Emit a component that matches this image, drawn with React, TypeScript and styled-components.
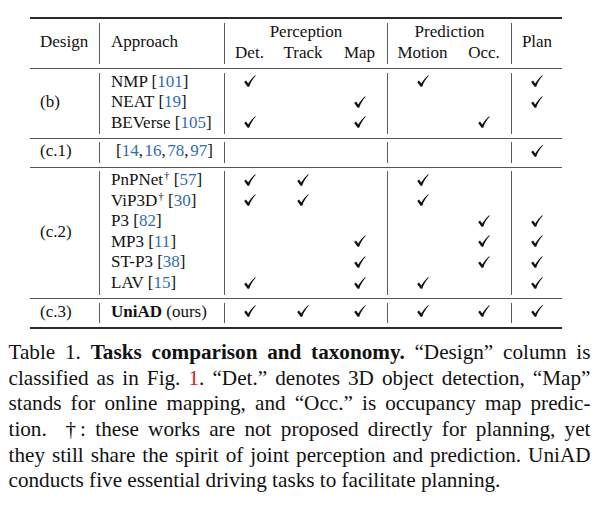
import React from "react";
import styled, { createGlobalStyle, css } from "styled-components";

const Global = createGlobalStyle`
  html, body { margin: 0; padding: 0; background: #ffffff; }
  body { font-family: "Liberation Serif", "Times New Roman", serif; color: #111111; }
`;

const Page = styled.div`
  width: 600px;
  height: 509px;
  box-sizing: border-box;
  padding-top: 17px;
  display: flex;
  flex-direction: column;
  overflow: hidden;
`;

const Table = styled.table`
  margin-left: 30px;
  width: 532px;
  table-layout: fixed;
  border-collapse: separate;
  border-spacing: 0;
  font-size: 17px;
`;

const cellBase = css<{ $line?: boolean; $pad?: number; $center?: boolean; $mid?: boolean }>`
  padding: 0 0 3.6px ${(p) => p.$pad ?? 0}px;
  line-height: 17px;
  font-weight: normal;
  text-align: ${(p) => (p.$center ? "center" : "left")};
  vertical-align: ${(p) => (p.$mid ? "middle" : "top")};
  border-left: ${(p) => (p.$line ? "1px solid #5a5a5a" : "none")};
  white-space: nowrap;
  box-sizing: border-box;
`;

const Cell = styled.td<{ $line?: boolean; $pad?: number; $center?: boolean; $mid?: boolean }>`
  ${cellBase}
`;

const Head = styled.th<{ $line?: boolean; $pad?: number; $center?: boolean; $mid?: boolean }>`
  ${cellBase}
`;

const GapCell = styled.td<{ $h: number }>`
  padding: 0;
  height: ${(p) => p.$h}px;
  font-size: 0;
  line-height: 0;
`;

const RuleCell = styled.td<{ $w: number; $c: string }>`
  padding: 0;
  height: 0;
  font-size: 0;
  line-height: 0;
  border-top: ${(p) => p.$w}px solid ${(p) => p.$c};
`;

const Cite = styled.span`
  color: #2f6db0;
`;

const Dagger = styled.sup`
  font-size: 11px;
  line-height: 0;
  vertical-align: 6px;
  margin-left: 1px;
`;

const Bold = styled.b`
  font-weight: bold;
`;

const CiteList = styled.span`
  & > span + span { margin-left: 1.6px; }
`;

const CheckSvg = styled.svg`
  display: block;
  width: 12px;
  height: 12px;
  margin: 2.6px auto 0;
`;

const Caption = styled.div`
  margin: 11.5px 0 0 8.5px;
  width: 582px;
  font-size: 21.2px;
  line-height: 25.6px;
  color: #111111;
`;

const CapLine = styled.span<{ $last?: boolean }>`
  display: block;
  text-align: justify;
  text-align-last: ${(p) => (p.$last ? "left" : "justify")};
`;

const Red = styled.span`
  color: #e3141b;
`;

const Check = () => (
  <CheckSvg viewBox="0 0 12 12">
    <path
      d="M0.2 7 L2 5.6 L4.2 8.6 C6.2 5.2 8.6 2.2 11.2 0.2 L11.8 0.8 C8.9 3.7 6.7 7.3 5.2 11.8 L3.6 11.8 Z"
      fill="#111111"
    />
  </CheckSvg>
);

const Gap = ({ h }: { h: number }) => (
  <tr>
    <GapCell colSpan={8} $h={h} />
  </tr>
);

const Rule = ({ w, c }: { w: number; c: string }) => (
  <tr>
    <RuleCell colSpan={8} $w={w} $c={c} />
  </tr>
);

type Row = { approach: React.ReactNode; marks: string; pad?: number };
type Group = { design: string; rows: Row[] };

const Ref = ({ n }: { n: string }) => (
  <>
    [<Cite>{n}</Cite>]
  </>
);

const groups: Group[] = [
  {
    design: "(b)",
    rows: [
      { approach: <>NMP <Ref n="101" /></>, marks: "100101" },
      { approach: <>NEAT <Ref n="19" /></>, marks: "001001" },
      { approach: <>BEVerse <Ref n="105" /></>, marks: "101010" },
    ],
  },
  {
    design: "(c.1)",
    rows: [
      {
        approach: (
          <CiteList>
            <span>[<Cite>14</Cite>,</span>
            <span><Cite>16</Cite>,</span>
            <span><Cite>78</Cite>,</span>
            <span><Cite>97</Cite>]</span>
          </CiteList>
        ),
        marks: "000001",
        pad: 16,
      },
    ],
  },
  {
    design: "(c.2)",
    rows: [
      { approach: <>PnPNet<Dagger>†</Dagger> <Ref n="57" /></>, marks: "110100" },
      { approach: <>ViP3D<Dagger>†</Dagger> <Ref n="30" /></>, marks: "110100" },
      { approach: <>P3 <Ref n="82" /></>, marks: "000011" },
      { approach: <>MP3 <Ref n="11" /></>, marks: "001011" },
      { approach: <>ST-P3 <Ref n="38" /></>, marks: "001011" },
      { approach: <>LAV <Ref n="15" /></>, marks: "101101" },
    ],
  },
  {
    design: "(c.3)",
    rows: [{ approach: <><Bold>UniAD</Bold> (ours)</>, marks: "111111" }],
  },
];

// which of the 6 task columns start with a vertical line: Det, Motion, Plan
const taskLine = [true, false, false, true, false, true];

const GroupRows = ({ g }: { g: Group }) => (
  <>
    <Gap h={3.5} />
    {g.rows.map((r, i) => (
      <tr key={i}>
        {i === 0 && (
          <Cell rowSpan={g.rows.length} $pad={10} $mid>
            {g.design}
          </Cell>
        )}
        <Cell $line $pad={r.pad ?? 11}>
          {r.approach}
        </Cell>
        {r.marks.split("").map((m, j) => (
          <Cell key={j} $line={taskLine[j]} $center>
            {m === "1" ? <Check /> : null}
          </Cell>
        ))}
      </tr>
    ))}
    <Gap h={3.5} />
  </>
);

export default function App() {
  return (
    <>
      <Global />
      <Page>
        <Table>
          <colgroup>
            <col style={{ width: 69 }} />
            <col style={{ width: 125 }} />
            <col style={{ width: 50 }} />
            <col style={{ width: 58 }} />
            <col style={{ width: 55 }} />
            <col style={{ width: 70 }} />
            <col style={{ width: 54 }} />
            <col style={{ width: 51 }} />
          </colgroup>
          <tbody>
            <Rule w={2} c="#2a2a2a" />
            <Gap h={4} />
            <tr>
              <Head rowSpan={2} $pad={10} $mid>Design</Head>
              <Head rowSpan={2} $line $pad={11} $mid>Approach</Head>
              <Head colSpan={3} $line $center>Perception</Head>
              <Head colSpan={2} $line $center>Prediction</Head>
              <Head rowSpan={2} $line $center $mid>Plan</Head>
            </tr>
            <tr>
              <Head $line $center>Det.</Head>
              <Head $center>Track</Head>
              <Head $center>Map</Head>
              <Head $line $center>Motion</Head>
              <Head $center>Occ.</Head>
            </tr>
            <Gap h={4} />
            {groups.map((g, i) => (
              <React.Fragment key={i}>
                <Rule w={1} c="#555555" />
                <GroupRows g={g} />
              </React.Fragment>
            ))}
            <Rule w={2} c="#2a2a2a" />
          </tbody>
        </Table>
        <Caption>
          <CapLine>
            Table 1. <Bold>Tasks comparison and taxonomy.</Bold> “Design” column is
          </CapLine>
          <CapLine>
            classified as in Fig. <Red>1</Red>. “Det.” denotes 3D object detection, “Map”
          </CapLine>
          <CapLine>
            stands for online mapping, and “Occ.” is occupancy map predic-
          </CapLine>
          <CapLine>
            tion.{"\u00a0 "}†: these works are not proposed directly for planning, yet
          </CapLine>
          <CapLine>
            they still share the spirit of joint perception and prediction. UniAD
          </CapLine>
          <CapLine $last>
            conducts five essential driving tasks to facilitate planning.
          </CapLine>
        </Caption>
      </Page>
    </>
  );
}
